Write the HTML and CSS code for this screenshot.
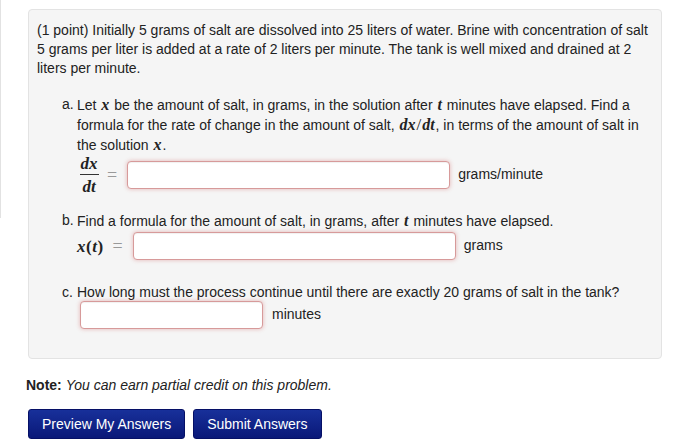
FILE: index.html
```html
<!DOCTYPE html>
<html>
<head>
    <title>Problem</title>
    <link rel="stylesheet" href="styles.css">
</head>
<body>
    <div class="page">
        <div class="rail"></div>
        <div class="main">
            <div class="problem">
                <p class="intro">(1 point) Initially 5 grams of salt are dissolved into 25 liters of water. Brine with concentration of salt 5 grams per liter is added at a rate of 2 liters per minute. The tank is well mixed and drained at 2 liters per minute.</p>

                <div class="part">
                    <span class="label">a.</span>
                    <div class="body">
                        <div class="text">Let <i class="m">x</i> be the amount of salt, in grams, in the solution after <i class="m">t</i> minutes have elapsed. Find a formula for the rate of change in the amount of salt, <i class="m">dx</i><span class="m-up">/</span><i class="m">dt</i>, in terms of the amount of salt in the solution <i class="m">x</i>.</div>
                        <div class="answer answer-a">
                            <span class="frac"><i class="num">dx</i><i class="den">dt</i></span>
                            <span class="eq">=</span>
                            <input class="field wide" type="text">
                            <span class="unit">grams/minute</span>
                        </div>
                    </div>
                </div>

                <div class="part part-b">
                    <span class="label">b.</span>
                    <div class="body">
                        <div class="text">Find a formula for the amount of salt, in grams, after <i class="m">t</i> minutes have elapsed.</div>
                        <div class="answer answer-b">
                            <span class="fx"><i>x</i>(<i>t</i>)</span>
                            <span class="eq">=</span>
                            <input class="field wide" type="text">
                            <span class="unit">grams</span>
                        </div>
                    </div>
                </div>

                <div class="part part-c">
                    <span class="label">c.</span>
                    <div class="body">
                        <div class="text">How long must the process continue until there are exactly 20 grams of salt in the tank?</div>
                        <div class="answer answer-c">
                            <input class="field short" type="text">
                            <span class="unit">minutes</span>
                        </div>
                    </div>
                </div>
            </div>

            <p class="note"><b>Note:</b> <i>You can earn partial credit on this problem.</i></p>

            <div class="buttons">
                <button class="btn">Preview My Answers</button>
                <button class="btn">Submit Answers</button>
            </div>
        </div>
    </div>
</body>
</html>
```

FILE: styles.css
```css
body { margin: 0; background: #fff; color: #222; font-family: "Liberation Sans", Arial, sans-serif; font-size: 14px; line-height: 19px; }
.page { display: flex; }
.rail { width: 1px; height: 218px; background: #e2e2e2; }
.main { margin-left: 27px; width: 634px; padding-top: 9px; }

.problem { background: #f5f5f5; border: 1px solid #e3e3e3; border-radius: 4px; padding: 11px 8px 29px 8px; }
.intro { margin: 0 0 17px 0; }

.part { display: flex; padding-left: 25px; }
.label { width: 15px; flex: none; }
.body { flex: 1; }
.part-b { margin-top: 17px; }
.part-c { margin-top: 23px; }

.m { font-family: "Liberation Serif", serif; font-size: 16px; font-style: italic; font-weight: bold; padding: 0 1px; }
.m-up { font-family: "Liberation Serif", serif; font-size: 17px; }

.answer { display: flex; align-items: center; }
.answer-a { margin-top: 1px; height: 38px; }
.answer-b { margin-top: 1px; }
.answer-c { margin-top: -1px; }

.frac { display: inline-flex; flex-direction: column; align-items: center; width: 18px; margin-left: 3px; font-family: "Liberation Serif", serif; font-size: 17px; font-weight: bold; line-height: 18px; }
.frac .num { border-bottom: 1px solid #333; padding: 0 1px 1px; }
.frac .den { padding-top: 3px; }
.fx { font-family: "Liberation Serif", serif; font-size: 17px; font-weight: bold; letter-spacing: 0.5px; }
.eq { color: #999; font-family: "Liberation Serif", serif; font-size: 18px; margin: 0 10px 0 9px; }

.field { height: 28px; box-sizing: border-box; border: 1px solid #d79a9a; border-radius: 4px; background: #fff; box-shadow: 0 0 4px rgba(200, 60, 60, 0.35), inset 0 1px 1px rgba(0, 0, 0, 0.06); margin: 0; }
.wide { width: 323px; }
.short { width: 183px; margin-left: 3px; }
.unit { margin-left: 8px; margin-top: -1px; }
.answer-c .unit { margin-left: 9px; }

.note { margin: 17px 0 0 -2px; }
.buttons { display: flex; gap: 8px; margin-top: 14px; }
.btn { height: 30px; padding: 0 13px; border: 1px solid #061066; border-radius: 3px; background: linear-gradient(#18309a, #0a1878); color: #fff; font-family: "Liberation Sans", Arial, sans-serif; font-size: 14px; }
```
